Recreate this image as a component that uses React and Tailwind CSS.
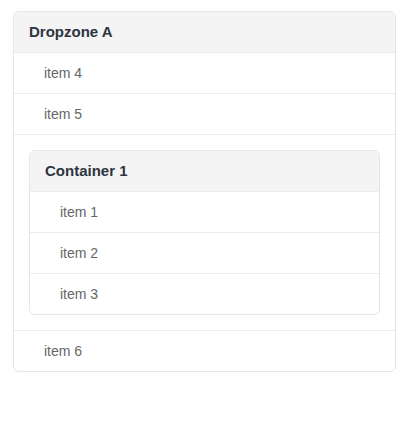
export default function App() {
  const row = 'h-[41px] flex items-center border-t border-[#ebebeb] text-[14px] text-[#666]';
  return (
    <div className="pt-[11px] pl-[13px]" style={{ fontFamily: '"Liberation Sans", Arial, sans-serif' }}>
      <div className="w-[383px] rounded-md border border-[#e6e6e6] bg-white overflow-hidden">
        <div className="h-[40px] flex items-center pl-[15px] bg-[#f4f4f4] text-[15px] font-bold text-[#2d3440]">
          Dropzone A
        </div>
        <div className={`${row} pl-[30px]`}>item 4</div>
        <div className={`${row} pl-[30px]`}>item 5</div>
        <div className="border-t border-[#ebebeb] p-[15px]">
          <div className="rounded-md border border-[#e6e6e6] overflow-hidden">
            <div className="h-[40px] flex items-center pl-[15px] bg-[#f4f4f4] text-[15px] font-bold text-[#2d3440]">
              Container 1
            </div>
            <div className={`${row} pl-[30px]`}>item 1</div>
            <div className={`${row} pl-[30px]`}>item 2</div>
            <div className={`${row} pl-[30px]`}>item 3</div>
          </div>
        </div>
        <div className={`${row} pl-[30px]`}>item 6</div>
      </div>
    </div>
  );
}
